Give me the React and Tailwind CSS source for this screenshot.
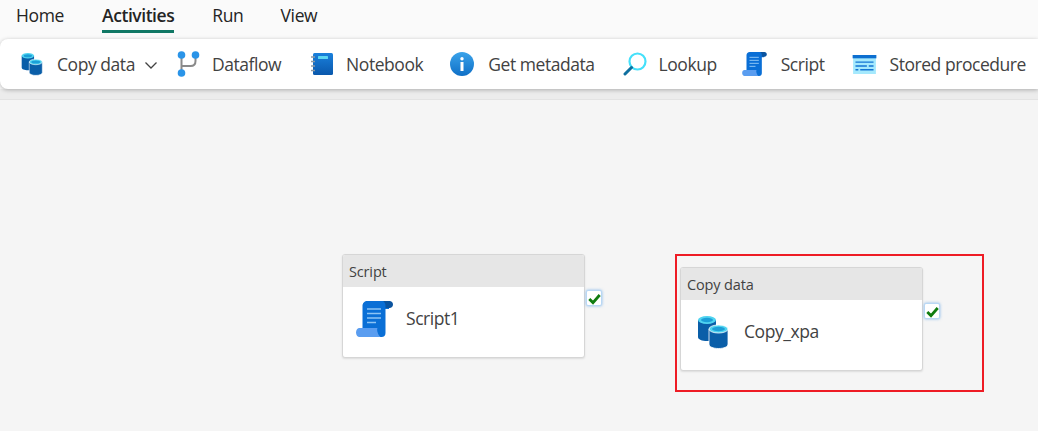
import React from 'react';

function CopyIcon({ className }) {
  return (
    <svg viewBox="0 0 32 34" className={className}>
      <path d="M1 5v17c0 2.500 4 4 9 4s9-1.500 9-4V5z" fill="#0a5ea8" />
      <ellipse cx="10" cy="5" rx="9" ry="4" fill="#50d4f0" />
      <ellipse cx="10" cy="5" rx="6" ry="2.200" fill="#1c9fd8" />
      <path d="M12 14v15c0 2.800 4 4.500 9.500 4.500S31 31.800 31 29V14z" fill="#0a5ea8" stroke="#fff" strokeWidth="0.800" />
      <ellipse cx="21.500" cy="14" rx="9.500" ry="4" fill="#50d4f0" stroke="#fff" strokeWidth="0.800" />
      <ellipse cx="21.500" cy="14" rx="6.500" ry="2.200" fill="#1c9fd8" />
    </svg>
  );
}

function ScriptIcon({ className }) {
  return (
    <svg viewBox="0 0 37 36" className={className}>
      <path d="M6.500 5c0-3 2-5 5-5H33v8h-3.500v24c0 2.500-1.500 4-4 4H6.500z" fill="#0a6fd6" />
      <path d="M27 0h6.500C35.500 0 37 1.500 37 3.500S35.500 7 33.500 7h-4V4.500C29.500 2.500 28.500 1 27 0z" fill="#0b549f" />
      <path d="M3.500 27h18c-.5 1-.5 2.500 0 4 .5 2 1.700 4 3 5H3.500C1.500 36 0 34 0 31.500S1.500 27 3.500 27z" fill="#5a9df0" />
      <path d="M11 8h14M11 12.500h14M11 17h14M11 21.500h9" stroke="#8cc4f5" strokeWidth="1.500" />
    </svg>
  );
}

function DataflowIcon({ className }) {
  return (
    <svg viewBox="0 0 22 26" className={className}>
      <path d="M4 4v18M4 15h9c3.500 0 5-2 5-5V4" fill="none" stroke="#8a8a8a" strokeWidth="2" />
      <circle cx="4" cy="4" r="3.800" fill="#2a94e8" />
      <circle cx="18" cy="4" r="3.800" fill="#2a94e8" />
      <circle cx="4" cy="22" r="3.800" fill="#2a94e8" />
    </svg>
  );
}

function NotebookIcon({ className }) {
  return (
    <svg viewBox="0 0 24 24" className={className}>
      <defs>
        <linearGradient id="nb" x1="0" y1="0" x2="0" y2="1">
          <stop offset="0" stopColor="#1a80dc" />
          <stop offset="1" stopColor="#0a58ac" />
        </linearGradient>
      </defs>
      <rect x="3" y="1" width="20" height="22" rx="1.500" fill="url(#nb)" />
      <rect x="8" y="4" width="10" height="3" rx="0.500" fill="#5cd6f2" />
      <path d="M1 5h4M1 9.500h4M1 14h4M1 18.500h4" stroke="#8f9aa5" strokeWidth="1.500" />
    </svg>
  );
}

function InfoIcon({ className }) {
  return (
    <svg viewBox="0 0 24 24" className={className}>
      <defs>
        <linearGradient id="inf" x1="0" y1="0" x2="0" y2="1">
          <stop offset="0" stopColor="#3ba3ea" />
          <stop offset="1" stopColor="#0f6fc6" />
        </linearGradient>
      </defs>
      <circle cx="12" cy="12" r="12" fill="url(#inf)" />
      <circle cx="12" cy="6.800" r="1.700" fill="#fff" />
      <rect x="10.500" y="10" width="3" height="9" fill="#fff" />
    </svg>
  );
}

function LookupIcon({ className }) {
  return (
    <svg viewBox="0 0 24 24" className={className}>
      <circle cx="14.500" cy="9.500" r="8" fill="#fff" stroke="#45e0fa" strokeWidth="2.200" />
      <path d="M8.500 15.500 2 22" stroke="#0f6f9f" strokeWidth="3" strokeLinecap="round" />
    </svg>
  );
}

function StoredIcon({ className }) {
  return (
    <svg viewBox="0 0 25 20" className={className}>
      <rect x="0.500" y="3" width="24" height="17" fill="#a5e9fd" />
      <rect x="0" y="0" width="25" height="3.500" fill="#0c6fd0" />
      <path d="M3 7.500h19M3 11.500h12M17 11.500h5M3 15.500h3M8 15.500h14" stroke="#1476d4" strokeWidth="1.500" />
    </svg>
  );
}

function Tool({ icon, label, chevron, className }) {
  return (
    <div className={`flex items-center shrink-0 ${className}`}>
      {icon}
      <span className="text-[17.500px] tracking-[-0.45px] text-[#424242] whitespace-nowrap">{label}</span>
      {chevron && (
        <svg viewBox="0 0 16 16" className="w-4 h-4 ml-[8px] mt-px">
          <path d="M2.500 5.500 8 11l5.500-5.500" fill="none" stroke="#424242" strokeWidth="1.300" />
        </svg>
      )}
    </div>
  );
}

function Node({ title, name, icon, className }) {
  return (
    <div className={`absolute w-[244px] h-[105px] ${className}`}>
      <div className="w-[243px] h-[104px] bg-white rounded-[3px] border border-[#d6d6d6] shadow-[0_1px_2px_rgba(0,0,0,0.1)] overflow-hidden">
        <div className="h-[32px] bg-[#e6e6e6] flex items-center pl-[6px] pt-px text-[14.500px] tracking-[-0.15px] text-[#424242]">{title}</div>
        <div className="flex items-center h-[60px] pl-[13px] pt-[3px]">
          {icon}
          <span className="text-[17.500px] tracking-[-0.45px] text-[#424242]">{name}</span>
        </div>
      </div>
      <div className="absolute left-[244px] top-[36px] w-[16px] h-[16px] bg-white rounded-[2px] border border-[#b9d8f5] shadow-[0_0_3px_rgba(90,160,230,0.7)] flex items-center justify-center">
        <svg viewBox="0 0 12 12" className="w-[13px] h-[13px] shrink-0">
          <path d="M1.200 6.500 4.600 9.800 10.800 2.800" fill="none" stroke="#107c10" strokeWidth="2.600" />
        </svg>
      </div>
    </div>
  );
}

export default function App() {
  return (
    <div className="w-[1038px] h-[431px] overflow-hidden bg-[#fafafa] flex flex-col font-['Open_Sans','Liberation_Sans',sans-serif]">
      <div className="h-[39px] flex shrink-0 text-[17.500px] tracking-[-0.35px] text-[#242424]">
        <span className="ml-[16px] mt-[2px]">Home</span>
        <div className="ml-[38px] flex flex-col items-stretch">
          <span className="mt-[2px] font-semibold tracking-[-0.45px]">Activities</span>
          <div className="h-[3px] mt-[2px] bg-[#117865]"></div>
        </div>
        <span className="ml-[38px] mt-[2px]">Run</span>
        <span className="ml-[37px] mt-[2px]">View</span>
      </div>
      <div className="h-[50px] shrink-0 bg-white rounded-l-[8px] shadow-[0_1px_4px_rgba(0,0,0,0.28)] flex items-center pl-[20px] z-10">
        <Tool icon={<CopyIcon className="w-[22px] h-[24px] ml-px mr-[14px]" />} label="Copy data" chevron />
        <Tool className="ml-[18px]" icon={<DataflowIcon className="w-[23px] h-[26px] mr-[12px]" />} label="Dataflow" />
        <Tool className="ml-[29px]" icon={<NotebookIcon className="w-[24px] h-[24px] mr-[12px]" />} label="Notebook" />
        <Tool className="ml-[27px]" icon={<InfoIcon className="w-[24px] h-[24px] mr-[14px]" />} label="Get metadata" />
        <Tool className="ml-[28px]" icon={<LookupIcon className="w-[24px] h-[24px] mr-[12px]" />} label="Lookup" />
        <Tool className="ml-[25px]" icon={<ScriptIcon className="w-[25px] h-[24px] mr-[14px]" />} label="Script" />
        <Tool className="ml-[28px]" icon={<StoredIcon className="w-[25px] h-[19px] mr-[12px]" />} label="Stored procedure" />
      </div>
      <div className="h-[10px] shrink-0 bg-[#ececec]"></div>
      <div className="relative flex-1 bg-[#f5f5f5] border-t border-[#e3e3e3]">
        <Node
          className="left-[342px] top-[154px]"
          title="Script"
          name="Script1"
          icon={<ScriptIcon className="w-[37px] h-[36px] mr-[13px]" />}
        />
        <Node
          className="left-[680px] top-[167px]"
          title="Copy data"
          name="Copy_xpa"
          icon={<CopyIcon className="w-[32px] h-[34px] ml-[3px] mr-[15px]" />}
        />
        <div className="absolute left-[675px] top-[154px] w-[309px] h-[138px] border-2 border-[#ee1c25]"></div>
      </div>
    </div>
  );
}
